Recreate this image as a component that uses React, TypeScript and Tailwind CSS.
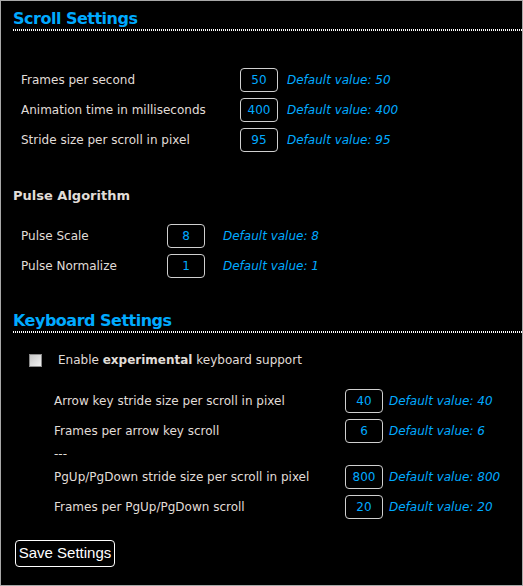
import React from "react";

type Row = { label: string; value: string; def: string };

const scrollRows: Row[] = [
  { label: "Frames per second", value: "50", def: "50" },
  { label: "Animation time in milliseconds", value: "400", def: "400" },
  { label: "Stride size per scroll in pixel", value: "95", def: "95" },
];

const pulseRows: Row[] = [
  { label: "Pulse Scale", value: "8", def: "8" },
  { label: "Pulse Normalize", value: "1", def: "1" },
];

const arrowRows: Row[] = [
  { label: "Arrow key stride size per scroll in pixel", value: "40", def: "40" },
  { label: "Frames per arrow key scroll", value: "6", def: "6" },
];

const pageRows: Row[] = [
  { label: "PgUp/PgDown stride size per scroll in pixel", value: "800", def: "800" },
  { label: "Frames per PgUp/PgDown scroll", value: "20", def: "20" },
];

function Heading({ title }: { title: string }) {
  return (
    <div className="pl-[12px]">
      <h2 className="text-[16px] leading-[20px] font-bold tracking-[-0.5px] text-[#00aaff]">{title}</h2>
      <div className="h-[2px] bg-[repeating-linear-gradient(90deg,#ffffff_0_1px,transparent_1px_2px)]" />
    </div>
  );
}

function SettingRow({ row, labelW, gap }: { row: Row; labelW: string; gap: string }) {
  return (
    <div className="flex h-[30px] items-center">
      <span className={`${labelW} shrink-0 text-[#e0ddd8]`}>{row.label}</span>
      <input
        readOnly
        value={row.value}
        className="h-[24px] w-[38px] shrink-0 rounded-[4px] border border-[#d0d0d0] bg-black text-center text-[#00aaff] outline-none"
      />
      <span className={`${gap} italic text-[#00aaff]`}>Default value: {row.def}</span>
    </div>
  );
}

export default function App() {
  return (
    <div className="h-[586px] w-[523px] overflow-hidden border border-[#a8a8a8] bg-black font-['DejaVu_Sans',Verdana,sans-serif] text-[12px]">
      <div className="pt-[8px]">
        <Heading title="Scroll Settings" />
      </div>

      <div className="mt-[34px] pl-[20px]">
        {scrollRows.map((r) => (
          <SettingRow key={r.label} row={r} labelW="w-[219px]" gap="ml-[9px]" />
        ))}
      </div>

      <h3 className="mt-[33px] pl-[12px] text-[13px] leading-[16px] font-bold text-[#e0ddd8]">
        Pulse Algorithm
      </h3>

      <div className="mt-[17px] pl-[20px]">
        {pulseRows.map((r) => (
          <SettingRow key={r.label} row={r} labelW="w-[146px]" gap="ml-[18px]" />
        ))}
      </div>

      <div className="mt-[30px]">
        <Heading title="Keyboard Settings" />
      </div>

      <label className="mt-[17px] flex h-[20px] items-center pl-[28px] text-[#e0ddd8]">
        <span className="h-[13px] w-[13px] shrink-0 border border-[#8a8a8a] bg-[linear-gradient(135deg,#c8c8c8,#f0f0f0)]" />
        <span className="ml-[16px]">
          Enable <b className="font-bold">experimental</b> keyboard support
        </span>
      </label>

      <div className="mt-[16px] pl-[53px]">
        {arrowRows.map((r) => (
          <SettingRow key={r.label} row={r} labelW="w-[291px]" gap="ml-[6px]" />
        ))}
        <div className="flex h-[16px] items-center text-[#e0ddd8]">---</div>
        {pageRows.map((r) => (
          <SettingRow key={r.label} row={r} labelW="w-[291px]" gap="ml-[6px]" />
        ))}
      </div>

      <button className="mt-[18px] ml-[14px] h-[27px] w-[100px] rounded-[4px] border border-white bg-black font-['Liberation_Sans',Arial,sans-serif] text-[15px] text-white">
        Save Settings
      </button>
    </div>
  );
}
